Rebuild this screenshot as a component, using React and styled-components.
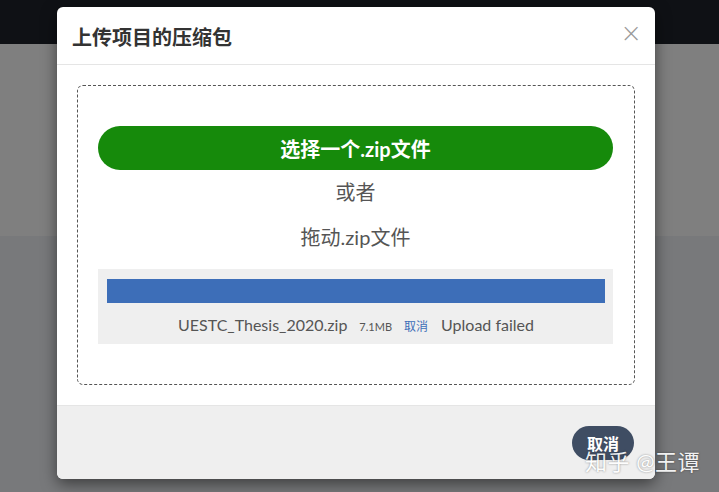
import styled, { createGlobalStyle } from 'styled-components';

const GlobalStyle = createGlobalStyle`
    html, body {
        margin: 0;
        padding: 0;
        height: 100%;
    }
    body {
        font-family: Lato, "Noto Sans CJK SC", sans-serif;
        background-color: #78797b;
        overflow: hidden;
    }
`

function App() {
    return (
        <>
            <GlobalStyle />
            <Page>
                <TopBar />
                <Band />
                <Modal>
                    <ModalHeader>
                        <Title>上传项目的压缩包</Title>
                        <CloseButton>×</CloseButton>
                    </ModalHeader>
                    <ModalBody>
                        <DropZone>
                            <SelectButton>选择一个.zip文件</SelectButton>
                            <HintText>或者</HintText>
                            <HintText>拖动.zip文件</HintText>
                            <UploadBox>
                                <ProgressBar />
                                <FileRow>
                                    <FileName>UESTC_Thesis_2020.zip</FileName>
                                    <FileSize>7.1MB</FileSize>
                                    <CancelLink>取消</CancelLink>
                                    <Status>Upload failed</Status>
                                </FileRow>
                            </UploadBox>
                        </DropZone>
                    </ModalBody>
                    <ModalFooter>
                        <FooterButton>取消</FooterButton>
                    </ModalFooter>
                </Modal>
                <Watermark>知乎 @王谭</Watermark>
            </Page>
        </>
    );
}

const Page = styled.div`
    position: relative;
    width: 719px;
    height: 492px;
    background-color: #78797b;
    overflow: hidden;
`

const TopBar = styled.div`
    height: 44px;
    background-color: #0f1115;
`

const Band = styled.div`
    height: 192px;
    background-color: #7f7f7f;
`

const Modal = styled.div`
    position: absolute;
    top: 7px;
    left: 57px;
    width: 598px;
    background-color: #fff;
    border-radius: 6px;
    box-shadow: 0 5px 15px rgba(0, 0, 0, 0.5);
    overflow: hidden;
`

const ModalHeader = styled.div`
    height: 58px;
    display: flex;
    align-items: center;
    justify-content: space-between;
    padding: 0 15px;
    border-bottom: 1px solid #e5e5e5;
    box-sizing: border-box;
`

const Title = styled.h4`
    margin: 0;
    padding-top: 2px;
    font-size: 20px;
    font-weight: 700;
    color: #333;
`

const CloseButton = styled.span`
    font-family: "DejaVu Sans", sans-serif;
    font-size: 26px;
    font-weight: 300;
    color: #9a9a9a;
    margin-right: -2px;
    margin-bottom: 6px;
    cursor: pointer;
`

const ModalBody = styled.div`
    padding: 20px;
    border-bottom: 1px solid #e5e5e5;
`

const DropZone = styled.div`
    border: 1px dashed #555;
    border-radius: 6px;
    padding: 40px 21px 40px 20px;
    display: flex;
    flex-direction: column;
    align-items: stretch;
`

const SelectButton = styled.div`
    height: 44px;
    border-radius: 22px;
    background-color: #168a0b;
    color: #fff;
    font-size: 20px;
    font-weight: 700;
    display: flex;
    align-items: center;
    justify-content: center;
    cursor: pointer;
`

const HintText = styled.div`
    text-align: center;
    font-size: 20px;
    line-height: 45px;
    color: #555;
`

const UploadBox = styled.div`
    margin-top: 9px;
    background-color: #efefef;
    padding: 10px 8px 4px 9px;
`

const ProgressBar = styled.div`
    height: 24px;
    background-color: #3d6eb8;
`

const FileRow = styled.div`
    display: flex;
    justify-content: center;
    align-items: baseline;
    padding-top: 9px;
    line-height: 26px;
    color: #555;
`

const FileName = styled.span`
    font-size: 16px;
`

const FileSize = styled.span`
    font-size: 11px;
    margin-left: 12px;
    font-variant: small-caps;
`

const CancelLink = styled.span`
    font-size: 12px;
    color: #3d6eb8;
    margin-left: 12px;
    cursor: pointer;
`

const Status = styled.span`
    font-size: 16px;
    margin-left: 13px;
`

const ModalFooter = styled.div`
    background-color: #efefef;
    height: 73px;
    display: flex;
    justify-content: flex-end;
    align-items: flex-start;
    padding: 20px 21px 0 0;
    box-sizing: border-box;
`

const FooterButton = styled.div`
    height: 34px;
    padding: 0 15px;
    border-radius: 17px;
    background-color: #3f4d63;
    color: #fff;
    font-size: 16px;
    font-weight: 700;
    display: flex;
    align-items: center;
    cursor: pointer;
`

const Watermark = styled.div`
    position: absolute;
    left: 585px;
    top: 444px;
    font-size: 22px;
    color: #fff;
    letter-spacing: 0.5px;
    text-shadow: 0 0 2px rgba(0, 0, 0, 0.5);
    opacity: 0.9;
    white-space: nowrap;
`

export default App;
